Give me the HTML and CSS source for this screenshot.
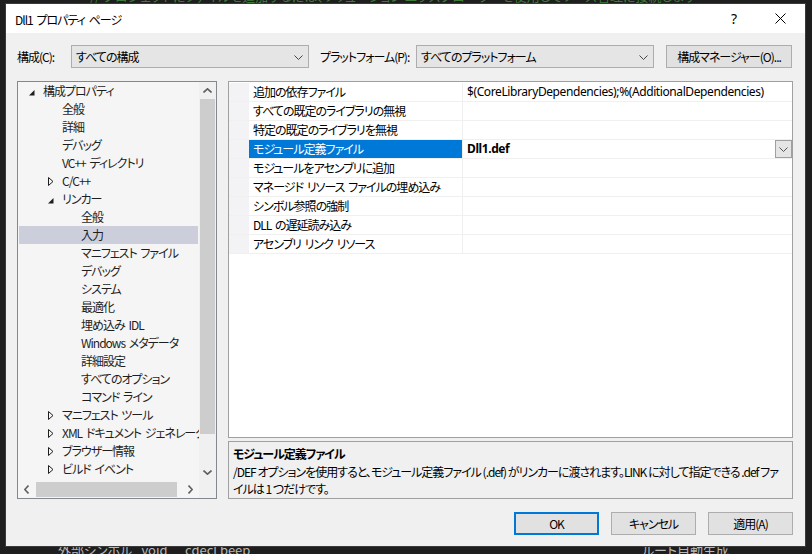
FILE: index.html
```html
<!DOCTYPE html>
<html lang="ja">

<head>
    <meta charset="UTF-8">
    <meta name="viewport" content="width=device-width, initial-scale=1.0">
    <title>Dll1 プロパティ ページ</title>
    <link rel="stylesheet" href="styles.css">
</head>

<body>

    <!-- editor behind the dialog -->
    <div class="backdrop">
        <p class="code-line code-top">// プロジェクトにファイルを追加するには、ソリューション エクスプローラーを使用してソース管理に接続します</p>
        <p class="code-line code-bottom">外部シンボル "void __cdecl beep</p>
        <p class="code-line code-right">ルート自動生成</p>
    </div>

    <div class="dialog">
        <div class="titlebar">
            <span class="title">Dll1 プロパティ ページ</span>
            <span class="title-btn help">?</span>
            <span class="title-btn close">
                <svg width="11" height="11" viewBox="0 0 11 11">
                    <path d="M0.5 0.5 L10.5 10.5 M10.5 0.5 L0.5 10.5" stroke="#000" stroke-width="1" fill="none" />
                </svg>
            </span>
        </div>

        <div class="dialog-body">
            <div class="config-row">
                <label class="label-config">構成(C):</label>
                <div class="combo">
                    <span>すべての構成</span>
                    <svg class="chevron" width="9" height="5" viewBox="0 0 9 5">
                        <path d="M0.5 0.5 L4.5 4.5 L8.5 0.5" stroke="#444" fill="none" />
                    </svg>
                </div>
                <label class="label-platform">プラットフォーム(P):</label>
                <div class="combo">
                    <span>すべてのプラットフォーム</span>
                    <svg class="chevron" width="9" height="5" viewBox="0 0 9 5">
                        <path d="M0.5 0.5 L4.5 4.5 L8.5 0.5" stroke="#444" fill="none" />
                    </svg>
                </div>
                <button class="btn btn-manager">構成マネージャー(O)...</button>
            </div>

            <div class="main">
                <div class="tree">
                    <div class="tree-items">
                        <div class="node lv0"><span class="exp open"></span>構成プロパティ</div>
                        <div class="node lv1"><span class="exp"></span>全般</div>
                        <div class="node lv1"><span class="exp"></span>詳細</div>
                        <div class="node lv1"><span class="exp"></span>デバッグ</div>
                        <div class="node lv1"><span class="exp"></span>VC++ ディレクトリ</div>
                        <div class="node lv1"><span class="exp closed"></span>C/C++</div>
                        <div class="node lv1"><span class="exp open"></span>リンカー</div>
                        <div class="node lv2"><span class="exp"></span>全般</div>
                        <div class="node lv2 selected"><span class="exp"></span>入力</div>
                        <div class="node lv2"><span class="exp"></span>マニフェスト ファイル</div>
                        <div class="node lv2"><span class="exp"></span>デバッグ</div>
                        <div class="node lv2"><span class="exp"></span>システム</div>
                        <div class="node lv2"><span class="exp"></span>最適化</div>
                        <div class="node lv2"><span class="exp"></span>埋め込み IDL</div>
                        <div class="node lv2"><span class="exp"></span>Windows メタデータ</div>
                        <div class="node lv2"><span class="exp"></span>詳細設定</div>
                        <div class="node lv2"><span class="exp"></span>すべてのオプション</div>
                        <div class="node lv2"><span class="exp"></span>コマンド ライン</div>
                        <div class="node lv1"><span class="exp closed"></span>マニフェスト ツール</div>
                        <div class="node lv1"><span class="exp closed"></span>XML ドキュメント ジェネレーター</div>
                        <div class="node lv1"><span class="exp closed"></span>ブラウザー情報</div>
                        <div class="node lv1"><span class="exp closed"></span>ビルド イベント</div>
                        <div class="node lv1"><span class="exp closed"></span>カスタム ビルド ステップ</div>
                    </div>

                    <div class="vscroll">
                        <span class="arrow">
                            <svg width="9" height="5" viewBox="0 0 9 5"><path d="M0.5 4.5 L4.5 0.8 L8.5 4.5" stroke="#606060" stroke-width="1.6" fill="none" /></svg>
                        </span>
                        <div class="track"><div class="thumb"></div></div>
                        <span class="arrow">
                            <svg width="9" height="5" viewBox="0 0 9 5"><path d="M0.5 0.5 L4.5 4.2 L8.5 0.5" stroke="#606060" stroke-width="1.6" fill="none" /></svg>
                        </span>
                    </div>

                    <div class="hscroll">
                        <span class="arrow">
                            <svg width="5" height="9" viewBox="0 0 5 9"><path d="M4.5 0.5 L0.8 4.5 L4.5 8.5" stroke="#606060" stroke-width="1.6" fill="none" /></svg>
                        </span>
                        <div class="track"><div class="thumb"></div></div>
                        <span class="arrow">
                            <svg width="5" height="9" viewBox="0 0 5 9"><path d="M0.5 0.5 L4.2 4.5 L0.5 8.5" stroke="#606060" stroke-width="1.6" fill="none" /></svg>
                        </span>
                    </div>
                    <div class="corner"></div>
                </div>

                <div class="right">
                    <div class="grid">
                        <div class="prop">
                            <span class="gutter"></span>
                            <span class="name">追加の依存ファイル</span>
                            <span class="value">$(CoreLibraryDependencies);%(AdditionalDependencies)</span>
                        </div>
                        <div class="prop">
                            <span class="gutter"></span>
                            <span class="name">すべての既定のライブラリの無視</span>
                            <span class="value"></span>
                        </div>
                        <div class="prop">
                            <span class="gutter"></span>
                            <span class="name">特定の既定のライブラリを無視</span>
                            <span class="value"></span>
                        </div>
                        <div class="prop selected">
                            <span class="gutter"></span>
                            <span class="name">モジュール定義ファイル</span>
                            <span class="value">
                                <b>Dll1.def</b>
                                <span class="drop">
                                    <svg width="9" height="5" viewBox="0 0 9 5"><path d="M0.5 0.5 L4.5 4.5 L8.5 0.5" stroke="#555" fill="none" /></svg>
                                </span>
                            </span>
                        </div>
                        <div class="prop">
                            <span class="gutter"></span>
                            <span class="name">モジュールをアセンブリに追加</span>
                            <span class="value"></span>
                        </div>
                        <div class="prop">
                            <span class="gutter"></span>
                            <span class="name">マネージド リソース ファイルの埋め込み</span>
                            <span class="value"></span>
                        </div>
                        <div class="prop">
                            <span class="gutter"></span>
                            <span class="name">シンボル参照の強制</span>
                            <span class="value"></span>
                        </div>
                        <div class="prop">
                            <span class="gutter"></span>
                            <span class="name">DLL の遅延読み込み</span>
                            <span class="value"></span>
                        </div>
                        <div class="prop">
                            <span class="gutter"></span>
                            <span class="name">アセンブリ リンク リソース</span>
                            <span class="value"></span>
                        </div>
                    </div>

                    <div class="desc">
                        <p class="desc-title">モジュール定義ファイル</p>
                        <p class="desc-text">/DEF オプションを使用すると、モジュール定義ファイル (.def) がリンカーに渡されます。LINK に対して指定できる .def ファイルは 1 つだけです。</p>
                    </div>
                </div>
            </div>

            <div class="footer">
                <button class="btn btn-default">OK</button>
                <button class="btn">キャンセル</button>
                <button class="btn">適用(A)</button>
            </div>
        </div>
    </div>

</body>

</html>
```

FILE: styles.css
```css
* {
    margin: 0;
    padding: 0;
    box-sizing: border-box;
}

body {
    width: 812px;
    height: 554px;
    overflow: hidden;
    position: relative;
    background-color: #1e1e1e;
    font-family: "Noto Sans CJK JP", "Noto Sans", sans-serif;
    font-size: 12px;
    font-feature-settings: "palt";
    letter-spacing: -1px;
    word-spacing: 2px;
    color: #000;
}

/* editor text showing round the dialog */
.backdrop {
    position: absolute;
    inset: 0;
}

.code-line {
    position: absolute;
    white-space: nowrap;
    line-height: 18px;
    font-size: 13px;
    letter-spacing: 0;
    word-spacing: 0;
}

.code-top {
    left: 90px;
    top: -13px;
    color: #3f7a38;
}

.code-bottom {
    left: 58px;
    top: 541px;
    color: #b8b8b8;
}

.code-right {
    left: 642px;
    top: 541px;
    color: #b8b8b8;
}

.dialog {
    position: absolute;
    left: 6px;
    top: 4px;
    width: 799px;
    height: 542px;
    background-color: #f0f0f0;
    display: flex;
    flex-direction: column;
    box-shadow: 0 0 0 1px #3a3a3a;
}

.titlebar {
    height: 29px;
    background-color: #fff;
    display: flex;
    align-items: center;
    padding-left: 9px;
}

.title {
    flex: 1;
    font-size: 12px;
    padding-top: 1px;
}

.title-btn {
    display: flex;
    align-items: center;
    justify-content: center;
    height: 29px;
}

.help {
    width: 46px;
    font-family: "Noto Sans", sans-serif;
    font-size: 14px;
    letter-spacing: 0;
}

.close {
    width: 46px;
    margin-right: 2px;
}

.dialog-body {
    flex: 1;
    display: flex;
    flex-direction: column;
    padding: 12px 12px 11px 11px;
}

/* configuration / platform selectors */
.config-row {
    display: flex;
    align-items: center;
    height: 23px;
    white-space: nowrap;
}

.label-config {
    width: 54px;
}

.label-platform {
    width: 96px;
    margin-left: 11px;
}

.combo {
    width: 238px;
    height: 23px;
    background-color: #e5e5e5;
    border: 1px solid #adadad;
    display: flex;
    align-items: center;
    justify-content: space-between;
    padding: 0 5px 0 4px;
}

.chevron {
    margin-top: 1px;
}

.btn {
    height: 23px;
    background-color: #e1e1e1;
    border: 1px solid #adadad;
    font-family: inherit;
    font-size: 12px;
    font-feature-settings: "palt";
    letter-spacing: -1px;
    color: #000;
}

.btn-manager {
    width: 126px;
    margin-left: 12px;
}

.main {
    display: flex;
    height: 418px;
    margin-top: 13px;
}

/* tree of property pages */
.tree {
    width: 200px;
    border: 1px solid #828790;
    background-color: #f5f5f5;
    display: grid;
    grid-template-columns: 181px 17px;
    grid-template-rows: 399px 17px;
}

.tree-items {
    overflow: hidden;
}

.node {
    height: 18px;
    line-height: 18px;
    margin: 0 1px;
    white-space: nowrap;
    display: flex;
    align-items: center;
    color: #1e1e1e;
}

.node.selected {
    background-color: #cccedb;
}

.lv0 {
    padding-left: 10px;
}

.lv1 {
    padding-left: 29px;
}

.lv2 {
    padding-left: 48px;
}

.exp {
    width: 14px;
    height: 18px;
    flex-shrink: 0;
    background-repeat: no-repeat;
}

.exp.open {
    background-image: url("data:image/svg+xml,%3Csvg xmlns='http://www.w3.org/2000/svg' width='6' height='6'%3E%3Cpath d='M5.5 0 L5.5 5.5 L0 5.5 Z' fill='%231e1e1e'/%3E%3C/svg%3E");
    background-position: 0 8px;
}

.exp.closed {
    background-image: url("data:image/svg+xml,%3Csvg xmlns='http://www.w3.org/2000/svg' width='6' height='9'%3E%3Cpath d='M0.5 0.5 L5 4.5 L0.5 8.5 Z' fill='none' stroke='%231e1e1e'/%3E%3C/svg%3E");
    background-position: 0 5px;
}

.vscroll,
.hscroll {
    display: flex;
    background-color: #f0f0f0;
}

.vscroll {
    flex-direction: column;
}

.arrow {
    width: 17px;
    height: 17px;
    flex-shrink: 0;
    display: flex;
    align-items: center;
    justify-content: center;
}

.track {
    flex: 1;
    display: flex;
}

.vscroll .track {
    padding: 0 1px;
    height: 365px;
}

.vscroll .thumb {
    width: 15px;
    height: 335px;
    background-color: #cdcdcd;
}

.hscroll .track {
    padding: 1px 0;
}

.hscroll .thumb {
    width: 141px;
    height: 15px;
    margin-left: 1px;
    background-color: #cdcdcd;
}

.hscroll {
    background-color: #f5f5f5;
}

.corner {
    background-color: #f0f0f0;
}

/* property grid */
.right {
    flex: 1;
    margin-left: 11px;
    display: flex;
    flex-direction: column;
}

.grid {
    height: 357px;
    background-color: #fff;
    border: 1px solid #a0a0a0;
    padding-top: 1px;
}

.prop {
    display: flex;
    height: 19px;
    line-height: 18px;
    border-bottom: 1px solid #f0f0f0;
    white-space: nowrap;
}

.gutter {
    width: 20px;
    background-color: #f3f3f5;
}

.name {
    width: 214px;
    padding-left: 4px;
    border-right: 1px solid #f0f0f0;
    overflow: hidden;
}

.value {
    flex: 1;
    padding-left: 4px;
    display: flex;
    justify-content: space-between;
    font-family: "Noto Sans", "Noto Sans CJK JP", sans-serif;
    letter-spacing: -0.4px;
    word-spacing: 0;
}

.prop.selected .name {
    background-color: #0078d7;
    color: #fff;
}

.prop.selected .value b {
    font-weight: bold;
}

.drop {
    width: 17px;
    height: 18px;
    background-color: #e5e5e5;
    border: 1px solid #a0a0a0;
    display: flex;
    align-items: center;
    justify-content: center;
}

/* description of the selected property */
.desc {
    height: 58px;
    margin-top: 3px;
    border: 1px solid #a0a0a0;
    padding: 3px 8px 0 4px;
}

.desc-title {
    font-weight: bold;
    line-height: 18px;
}

.desc-text {
    line-height: 17px;
    word-spacing: 0;
    line-break: anywhere;
}

.footer {
    display: flex;
    justify-content: flex-end;
    gap: 12px;
    margin-top: 13px;
}

.footer .btn {
    width: 85px;
}

.btn-default {
    border: 2px solid #0078d7;
}
```
